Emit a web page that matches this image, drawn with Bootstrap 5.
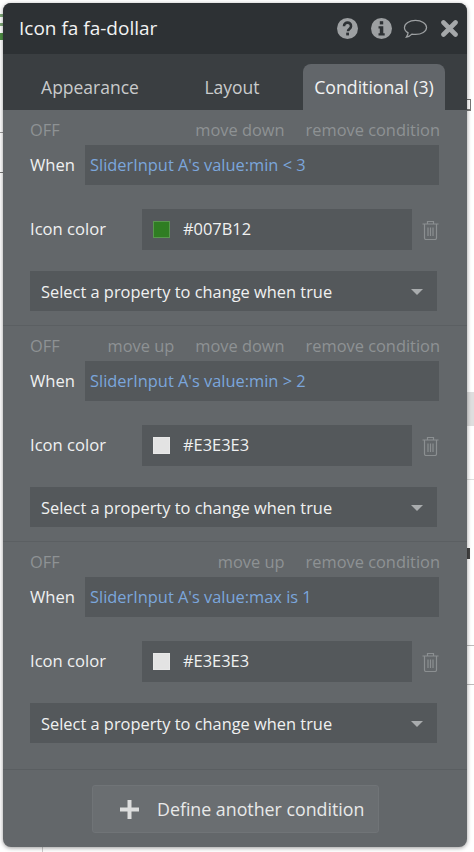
<!DOCTYPE html>
<html lang="en">
<head>
  <meta charset="UTF-8">
  <title>Icon fa fa-dollar</title>
  <link href="https://cdn.jsdelivr.net/npm/bootstrap@5.3.0/dist/css/bootstrap.min.css" rel="stylesheet">
  <script src="https://cdn.jsdelivr.net/npm/bootstrap@5.3.0/dist/js/bootstrap.bundle.min.js"></script>
  <style>
    body {
      background: #fff;
      font-family: "Open Sans", sans-serif;
      overflow: hidden;
    }
    .editor-wrap { padding: 3px 7px 5px 3px; height: 852px; position: relative; }
    .editor {
      position: relative;
      height: 844px;
      background: #63676a;
      border-radius: 8px;
      box-shadow: 0 1px 4px rgba(0, 0, 0, .4);
      overflow: hidden;
    }
    /* bits of the page behind the panel */
    .behind { position: absolute; display: block; }
    .behind.green-a { left: 0; top: 14px; width: 3px; height: 3px; background: #7fa878; }
    .behind.green-b { left: 0; top: 23px; width: 3px; height: 3px; background: #7fa878; }
    .behind.green-c { left: 0; top: 33px; width: 3px; height: 7px; background: #4f8f45; }
    .behind.line-a { left: 0; top: 132px; width: 3px; height: 1px; background: #999; }
    .behind.line-b { left: 0; top: 172px; width: 3px; height: 1px; background: #777; }
    .behind.strip { right: 0; top: 392px; width: 7px; height: 34px; background: #dedede; }
    .behind.line-c { right: 0; top: 479px; width: 7px; height: 1px; background: #ddd; }
    .behind.line-d { right: 0; top: 645px; width: 7px; height: 1px; background: #bbb; }
    .behind.line-e { right: 0; top: 684px; width: 7px; height: 1px; background: #bbb; }
    .behind.tick { left: 42px; top: 847px; width: 1px; height: 5px; background: #ccc; }
    .behind.stub-a { left: 467px; top: 99px; width: 4px; height: 12px; border: solid #777; border-width: 1px 1px 2px 0; }
    .behind.stub-b { left: 467px; top: 548px; width: 3px; height: 11px; background: #444; }
    .editor-head {
      height: 51px;
      background: #2d3134;
      color: #f2f3f3;
      font-size: 19px;
      padding: 0 9px 0 16px;
    }
    .head-icons { gap: 13px; }
    .head-icons .bubble-icon { margin-left: -2px; }
    .tab-band { height: 56px; background: #3a3e41; padding-top: 10px; }
    .tab-item {
      color: #c9cbcc;
      font-size: 17.5px;
      height: 46px;
      line-height: 46px;
      text-align: center;
    }
    .tab-item.first { width: 174px; }
    .tab-item.second { width: 110px; }
    .tab-item.current {
      width: 142px;
      margin-left: 16px;
      background: #62666a;
      color: #f2f3f3;
      border-radius: 8px 8px 0 0;
      font-size: 17.7px;
      white-space: nowrap;
    }
    .cond-block {
      height: 216px;
      padding: 6px 28px 0 27px;
      border-bottom: 1px solid #5b5f62;
    }
    .cond-block.last { height: 228px; border-bottom: 1px solid #5a5e61; }
    .cond-top { height: 29px; font-size: 16.4px; color: #8e9294; padding-bottom: 1px; margin-right: -1px; }
    .cond-actions { gap: 21px; }
    .when-row { height: 40px; }
    .when-label, .color-label { color: #f0f1f1; font-size: 16.6px; }
    .when-label { width: 55px; }
    .color-label { width: 112px; }
    .dark-field {
      background: #54585b;
      height: 40px;
      font-size: 16.4px;
      padding: 0 5px;
    }
    .when-field { width: 354px; color: #7ba6dc; }
    .color-row { height: 41px; margin-top: 24px; }
    .color-field { width: 270px; color: #f0f1f1; padding: 0 11px; gap: 13px; height: 41px; }
    .swatch { width: 17px; height: 17px; border: 1px solid rgba(255, 255, 255, .2); }
    .swatch.green { background: #2f7d22; }
    .swatch.pale { background: #e3e3e3; }
    .trash-box { margin-left: 10px; }
    .select-field {
      width: 407px;
      margin-top: 21px;
      color: #f0f1f1;
      padding: 2px 14px 0 11px;
    }
    .select-arrow {
      width: 0;
      height: 0;
      border-left: 6px solid transparent;
      border-right: 6px solid transparent;
      border-top: 6px solid #a9acae;
    }
    .add-zone { padding-top: 15px; }
    .add-btn {
      width: 287px;
      height: 48px;
      margin-left: 89px;
      background: #6a6e71;
      border: 1px solid #707477;
      border-radius: 3px;
      color: #e8e9e9;
      font-size: 17.8px;
      gap: 17px;
      padding-left: 26px;
      white-space: nowrap;
    }
  </style>
</head>
<body>
  <div class="editor-wrap">
    <span class="behind green-a"></span>
    <span class="behind green-b"></span>
    <span class="behind green-c"></span>
    <span class="behind line-a"></span>
    <span class="behind line-b"></span>
    <span class="behind strip"></span>
    <span class="behind line-c"></span>
    <span class="behind line-d"></span>
    <span class="behind line-e"></span>
    <span class="behind tick"></span>
    <span class="behind stub-a"></span>
    <span class="behind stub-b"></span>
    <div class="editor d-flex flex-column">
      <div class="editor-head d-flex align-items-center justify-content-between">
        <span>Icon fa fa-dollar</span>
        <div class="head-icons d-flex align-items-center">
          <svg width="21" height="21" viewBox="0 0 21 21"><circle cx="10.5" cy="10.5" r="10.5" fill="#9da0a2"/><path d="M7 8.2c0-5 7.2-4.6 7 0 0 2.8-3 2.6-3 5" fill="none" stroke="#2d3134" stroke-width="2.6"/><rect x="9.2" y="14.6" width="2.8" height="2.8" fill="#2d3134"/></svg>
          <svg width="21" height="21" viewBox="0 0 21 21"><circle cx="10.5" cy="10.5" r="10.5" fill="#9da0a2"/><rect x="8.8" y="3.2" width="3.4" height="3.2" fill="#2d3134"/><path d="M7.5 8.2h4.8v7h1.4v2.2H7.5v-2.2h1.3v-4.8H7.5z" fill="#2d3134"/></svg>
          <svg class="bubble-icon" width="25" height="22" viewBox="0 0 26 22"><path d="M13 2C6.700 2 1.500 5.200 1.500 9.500c0 2.400 1.600 4.300 3.800 5.500-.2 1.800-1 3.200-1.800 4.500 2.400-.5 4.500-1.900 5.700-3.200 1.200.2 2.500.3 3.800.3 6.300 0 11.500-3 11.500-7.100S19.300 2 13 2z" fill="none" stroke="#9da0a2" stroke-width="1.300"/></svg>
          <svg width="17" height="17" viewBox="0 0 17 17"><path d="M2.500 2.500l12 12M14.500 2.500l-12 12" stroke="#a5a8aa" stroke-width="4.600" stroke-linecap="round"/></svg>
        </div>
      </div>
      <div class="tab-band d-flex">
        <div class="tab-item first">Appearance</div>
        <div class="tab-item second">Layout</div>
        <div class="tab-item current">Conditional (3)</div>
      </div>

      <div class="cond-block">
        <div class="cond-top d-flex justify-content-between align-items-center">
          <span>OFF</span>
          <div class="cond-actions d-flex"><span>move down</span><span>remove condition</span></div>
        </div>
        <div class="when-row d-flex align-items-center">
          <span class="when-label">When</span>
          <div class="dark-field when-field d-flex align-items-center">SliderInput A's value:min &lt; 3</div>
        </div>
        <div class="color-row d-flex align-items-center">
          <span class="color-label">Icon color</span>
          <div class="dark-field color-field d-flex align-items-center"><span class="swatch green"></span>#007B12</div>
          <div class="trash-box d-flex">
            <svg width="17" height="20" viewBox="0 0 17 20" fill="none" stroke="#8b8f91" stroke-width="1.200"><path d="M.5 4h16M5.500 4V1.500h6V4M2.500 4v14a1.500 1.500 0 0 0 1.500 1.500h9a1.500 1.500 0 0 0 1.500-1.500V4M6 7.500v8.500M8.500 7.500v8.500M11 7.500v8.500"/></svg>
          </div>
        </div>
        <div class="dark-field select-field d-flex align-items-center justify-content-between">Select a property to change when true<span class="select-arrow"></span></div>
      </div>

      <div class="cond-block">
        <div class="cond-top d-flex justify-content-between align-items-center">
          <span>OFF</span>
          <div class="cond-actions d-flex"><span>move up</span><span>move down</span><span>remove condition</span></div>
        </div>
        <div class="when-row d-flex align-items-center">
          <span class="when-label">When</span>
          <div class="dark-field when-field d-flex align-items-center">SliderInput A's value:min &gt; 2</div>
        </div>
        <div class="color-row d-flex align-items-center">
          <span class="color-label">Icon color</span>
          <div class="dark-field color-field d-flex align-items-center"><span class="swatch pale"></span>#E3E3E3</div>
          <div class="trash-box d-flex">
            <svg width="17" height="20" viewBox="0 0 17 20" fill="none" stroke="#8b8f91" stroke-width="1.200"><path d="M.5 4h16M5.500 4V1.500h6V4M2.500 4v14a1.500 1.500 0 0 0 1.500 1.500h9a1.500 1.500 0 0 0 1.500-1.500V4M6 7.500v8.500M8.500 7.500v8.500M11 7.500v8.500"/></svg>
          </div>
        </div>
        <div class="dark-field select-field d-flex align-items-center justify-content-between">Select a property to change when true<span class="select-arrow"></span></div>
      </div>

      <div class="cond-block last">
        <div class="cond-top d-flex justify-content-between align-items-center">
          <span>OFF</span>
          <div class="cond-actions d-flex"><span>move up</span><span>remove condition</span></div>
        </div>
        <div class="when-row d-flex align-items-center">
          <span class="when-label">When</span>
          <div class="dark-field when-field d-flex align-items-center">SliderInput A's value:max is 1</div>
        </div>
        <div class="color-row d-flex align-items-center">
          <span class="color-label">Icon color</span>
          <div class="dark-field color-field d-flex align-items-center"><span class="swatch pale"></span>#E3E3E3</div>
          <div class="trash-box d-flex">
            <svg width="17" height="20" viewBox="0 0 17 20" fill="none" stroke="#8b8f91" stroke-width="1.200"><path d="M.5 4h16M5.500 4V1.500h6V4M2.500 4v14a1.500 1.500 0 0 0 1.500 1.500h9a1.500 1.500 0 0 0 1.500-1.500V4M6 7.500v8.500M8.500 7.500v8.500M11 7.500v8.500"/></svg>
          </div>
        </div>
        <div class="dark-field select-field d-flex align-items-center justify-content-between">Select a property to change when true<span class="select-arrow"></span></div>
      </div>

      <div class="add-zone">
        <div class="add-btn d-flex align-items-center">
          <svg width="21" height="21" viewBox="0 0 21 21"><path d="M10.500 1v19M1 10.500h19" stroke="#dcdddd" stroke-width="4"/></svg>
          <span>Define another condition</span>
        </div>
      </div>
    </div>
  </div>
</body>
</html>
